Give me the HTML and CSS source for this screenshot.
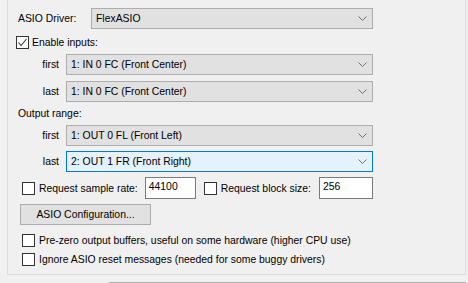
FILE: index.html
```html
<!DOCTYPE html>
<html lang="en">
<head>
  <meta charset="UTF-8" />
  <title>FlexASIO settings</title>
  <link rel="stylesheet" href="styles.css">
</head>
<body>
  <div class="panel">
    <div class="row r-driver">
      <span class="label driver-label">ASIO Driver:</span>
      <div class="combo driver-combo"><span>FlexASIO</span><svg class="chev" width="9" height="5" viewBox="0 0 9 5"><polyline points="0.5,0.5 4.5,4.5 8.5,0.5" /></svg></div>
    </div>

    <div class="row r-enable">
      <span class="check checked"><svg width="11" height="11" viewBox="0 0 11 11"><polyline points="1.5,5.5 4,8.5 9.5,2" /></svg></span>
      <span class="label">Enable inputs:</span>
    </div>

    <div class="row r-in-first sub">
      <span class="label side">first</span>
      <div class="combo"><span>1: IN 0 FC (Front Center)</span><svg class="chev" width="9" height="5" viewBox="0 0 9 5"><polyline points="0.5,0.5 4.5,4.5 8.5,0.5" /></svg></div>
    </div>
    <div class="row r-in-last sub">
      <span class="label side">last</span>
      <div class="combo"><span>1: IN 0 FC (Front Center)</span><svg class="chev" width="9" height="5" viewBox="0 0 9 5"><polyline points="0.5,0.5 4.5,4.5 8.5,0.5" /></svg></div>
    </div>

    <div class="row r-output">
      <span class="label">Output range:</span>
    </div>

    <div class="row r-out-first sub">
      <span class="label side">first</span>
      <div class="combo"><span>1: OUT 0 FL (Front Left)</span><svg class="chev" width="9" height="5" viewBox="0 0 9 5"><polyline points="0.5,0.5 4.5,4.5 8.5,0.5" /></svg></div>
    </div>
    <div class="row r-out-last sub">
      <span class="label side">last</span>
      <div class="combo focused"><span>2: OUT 1 FR (Front Right)</span><svg class="chev" width="9" height="5" viewBox="0 0 9 5"><polyline points="0.5,0.5 4.5,4.5 8.5,0.5" /></svg></div>
    </div>

    <div class="row r-request">
      <span class="check"></span>
      <span class="label">Request sample rate:</span>
      <span class="field rate">44100</span>
      <span class="check"></span>
      <span class="label">Request block size:</span>
      <span class="field block">256</span>
    </div>

    <div class="row r-button">
      <button class="btn">ASIO Configuration...</button>
    </div>

    <div class="row r-prezero">
      <span class="check"></span>
      <span class="label">Pre-zero output buffers, useful on some hardware (higher CPU use)</span>
    </div>
    <div class="row r-ignore">
      <span class="check"></span>
      <span class="label">Ignore ASIO reset messages (needed for some buggy drivers)</span>
    </div>
  </div>
  <div class="below"></div>
</body>
</html>
```

FILE: styles.css
```css
body { margin: 0; background: #f0f0f0; font-family: "Liberation Sans", Arial, sans-serif; font-size: 10.4px; color: #000; overflow: hidden; }

.panel { box-sizing: border-box; margin-left: 7px; width: 459px; height: 275px; border: 1px solid #dcdcdc; border-top: none; padding-top: 8px; }
.below { margin: 7px 0 0 109px; width: 357px; height: 2px; border-top: 1px solid #adadad; background: #e1e1e1; }

.row { display: flex; align-items: center; }
.label { white-space: nowrap; }

.r-driver { height: 21px; padding-left: 10px; }
.driver-label { width: 73px; }
.r-enable { height: 19px; margin-top: 4px; padding-left: 8px; }
.r-enable .label { margin-left: 3px; }
.sub { height: 21px; }
.side { width: 51px; text-align: right; margin-right: 7px; }
.r-in-first { margin-top: 2px; }
.r-in-last { margin-top: 6px; }
.r-output { height: 19px; margin-top: 2px; padding-left: 10px; }
.r-out-first { margin-top: 2px; }
.r-out-last { margin-top: 5px; }
.r-request { height: 22px; margin-top: 5px; padding-left: 14px; }
.r-request .label { margin-left: 4px; }
.r-button { height: 21px; margin-top: 5px; padding-left: 12px; }
.r-prezero { height: 19px; margin-top: 6px; padding-left: 14px; }
.r-ignore { height: 19px; margin-top: 0; padding-left: 14px; }
.r-prezero .label, .r-ignore .label { margin-left: 4px; }

.combo { box-sizing: border-box; position: relative; width: 307px; height: 21px; border: 1px solid #adadad; background: #e1e1e1; display: flex; align-items: center; padding-left: 4px; }
.driver-combo { width: 282px; }
.combo.focused { border-color: #0078d7; background: #e5f1fb; }
.chev { position: absolute; right: 5px; top: 7px; }
.chev polyline { fill: none; stroke: #707070; stroke-width: 1; }

.check { box-sizing: border-box; width: 13px; height: 13px; border: 1px solid #333; background: #fff; flex: none; display: flex; align-items: center; justify-content: center; }
.check.checked svg polyline { fill: none; stroke: #333; stroke-width: 1.1; }

.field { box-sizing: border-box; height: 22px; border: 1px solid #7a7a7a; background: #fff; padding: 2px 0 0 3px; align-self: flex-start; line-height: 14px; }
.rate { width: 51px; margin-left: 7px; margin-right: 8px; }
.block { width: 54px; margin-left: 8px; }

.btn { box-sizing: border-box; width: 131px; height: 21px; border: 1px solid #adadad; background: #e1e1e1; font: inherit; color: #000; padding: 0; }
```
